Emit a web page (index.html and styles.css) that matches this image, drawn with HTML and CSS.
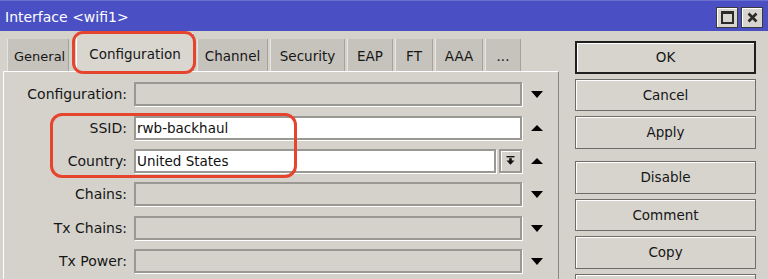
FILE: index.html
```html
<!DOCTYPE html>
<html>
<head>
<meta charset="utf-8">
<link rel="stylesheet" href="styles.css">
</head>
<body>
<div class="window">
  <div class="titlebar">
    <span class="title">Interface &lt;wifi1&gt;</span>
    <div class="tbtns">
      <div class="tbtn"><span class="maxicon"></span></div>
      <div class="tbtn"><svg width="11" height="11" viewBox="0 0 11 11"><path d="M1.5 1.5 L9.5 9.5 M9.5 1.5 L1.5 9.5" stroke="#2a2a2a" stroke-width="2.6"/></svg></div>
    </div>
  </div>
  <div class="main">
    <div class="left">
      <div class="tabs">
        <div class="tab t-general">General</div>
        <div class="tab active">Configuration</div>
        <div class="tab t-channel">Channel</div>
        <div class="tab t-security">Security</div>
        <div class="tab t-eap">EAP</div>
        <div class="tab t-ft">FT</div>
        <div class="tab t-aaa">AAA</div>
        <div class="tab t-more">...</div>
      </div>
      <div class="panel">
        <div class="row">
          <label>Configuration:</label>
          <div class="field"></div>
          <span class="tri down"></span>
        </div>
        <div class="row">
          <label>SSID:</label>
          <div class="field on">rwb-backhaul</div>
          <span class="tri up"></span>
        </div>
        <div class="row">
          <label>Country:</label>
          <div class="combo">
            <div class="field on">United States</div>
            <div class="dd"><svg width="9" height="9" viewBox="0 0 9 9"><rect x="0.5" y="0" width="8" height="1.4" fill="#111"/><rect x="3.2" y="2.2" width="2.6" height="3" fill="#111"/><path d="M0.5 4.6 H8.5 L4.5 8.8 Z" fill="#111"/></svg></div>
          </div>
          <span class="tri up"></span>
        </div>
        <div class="row">
          <label>Chains:</label>
          <div class="field"></div>
          <span class="tri down"></span>
        </div>
        <div class="row">
          <label>Tx Chains:</label>
          <div class="field"></div>
          <span class="tri down"></span>
        </div>
        <div class="row">
          <label>Tx Power:</label>
          <div class="field"></div>
          <span class="tri down"></span>
        </div>
      </div>
    </div>
    <div class="buttons">
      <div class="btn default">OK</div>
      <div class="btn">Cancel</div>
      <div class="btn">Apply</div>
      <div class="btn sep">Disable</div>
      <div class="btn">Comment</div>
      <div class="btn">Copy</div>
      <div class="btn"></div>
    </div>
  </div>
  <div class="mark mark-tab"></div>
  <div class="mark mark-fields"></div>
</div>
</body>
</html>
```

FILE: styles.css
```css
html, body {
  margin: 0;
  padding: 0;
}
body {
  width: 768px;
  height: 279px;
  overflow: hidden;
  background: #d5d2cc;
  font-family: "DejaVu Sans", Verdana, sans-serif;
  font-size: 13px;
  color: #161616;
}
.window {
  position: relative;
  width: 768px;
  height: 279px;
  overflow: hidden;
}
.titlebar {
  height: 31px;
  background: #4a50c3;
  border-top: 1px solid #6a70d2;
  box-sizing: border-box;
  display: flex;
  align-items: center;
  padding-left: 5px;
  padding-right: 5px;
  color: #fff;
}
.title {
  font-size: 14px;
  padding-top: 2px;
}
.tbtns {
  margin-left: auto;
  display: flex;
  gap: 3px;
  padding-top: 2px;
}
.tbtn {
  width: 22px;
  height: 21px;
  box-sizing: border-box;
  background: #d8d5cf;
  border: 1px solid #3a3a3a;
  box-shadow: inset 1px 1px 0 #fff;
  display: flex;
  align-items: center;
  justify-content: center;
}
.maxicon {
  width: 13px;
  height: 13px;
  box-sizing: border-box;
  border: 2px solid #2a2a2a;
  border-top-width: 3px;
}
.main {
  display: flex;
  height: 248px;
  overflow: hidden;
}
.left {
  width: 559px;
  padding-left: 3px;
  box-sizing: border-box;
}
.tabs {
  display: flex;
  align-items: flex-end;
  height: 40px;
  padding-left: 4px;
  gap: 2px;
}
.tab {
  height: 32px;
  box-sizing: border-box;
  background: #c6c3bd;
  border-left: 1px solid #e6e4e0;
  border-right: 1px solid #a5a29c;
  display: flex;
  align-items: center;
  justify-content: center;
  padding-top: 2px;
  font-size: 13.5px;
  white-space: nowrap;
  overflow: hidden;
  flex: none;
}
.t-general {
  width: 62px;
  justify-content: flex-start;
  padding-left: 6px;
  font-size: 13px;
}
.t-channel { width: 71px; }
.t-security { width: 75px; }
.t-eap { width: 46px; }
.t-ft { width: 38px; }
.t-aaa { width: 48px; }
.t-more { width: 36px; }
.tab.active {
  width: 118px;
  height: 38px;
  background: #d9d6d0;
  border-top: 1px solid #fff;
  border-left: 1px solid #fff;
  padding: 2px 0 0 0;
  margin: 0 1px 0 5px;
}
.panel {
  border-top: 1px solid #fff;
  border-left: 1px solid #fff;
  border-right: 1px solid #8a8782;
  height: 208px;
  box-sizing: border-box;
  padding-top: 10.3px;
  display: flex;
  flex-direction: column;
  gap: 9.33px;
}
.row {
  display: flex;
  align-items: center;
  height: 24px;
  flex: none;
}
.row label {
  width: 123px;
  text-align: right;
  flex: none;
  font-size: 14px;
}
.field {
  margin-left: 7px;
  width: 388px;
  height: 24px;
  box-sizing: border-box;
  border: 2px solid #9a9893;
  box-shadow: 1px 1px 0 #fff;
  background: #d5d2cc;
  padding-left: 1px;
  line-height: 20px;
  color: #111;
  font-size: 13.5px;
  flex: none;
}
.field.on {
  background: #fff;
}
.combo {
  margin-left: 7px;
  width: 388px;
  display: flex;
  gap: 3px;
  flex: none;
}
.combo .field {
  margin-left: 0;
  width: 362px;
}
.dd {
  width: 23px;
  height: 24px;
  box-sizing: border-box;
  border: 2px solid #9a9893;
  box-shadow: 1px 1px 0 #fff, inset 1px 1px 0 #fff;
  display: flex;
  align-items: center;
  justify-content: center;
}
.tri {
  margin-left: 9px;
  width: 0;
  height: 0;
  border-left: 6.5px solid transparent;
  border-right: 6.5px solid transparent;
}
.tri.down {
  border-top: 7px solid #000;
  margin-top: 1px;
}
.tri.up {
  border-bottom: 6px solid #000;
}
.buttons {
  margin-left: 16px;
  width: 181px;
  padding-top: 10px;
  display: flex;
  flex-direction: column;
  gap: 5px;
}
.btn {
  height: 32.5px;
  box-sizing: border-box;
  border: 1px solid #6f6d69;
  box-shadow: inset 1px 1px 0 #fff;
  background: #d7d4ce;
  display: flex;
  align-items: center;
  justify-content: center;
  flex: none;
  font-size: 13.5px;
}
.btn.default {
  border: 2px solid #1e1e1e;
}
.btn.sep {
  margin-top: 7.5px;
}
.mark {
  position: absolute;
  border: 3px solid #e5442d;
  box-sizing: border-box;
}
.mark-tab {
  left: 72px;
  top: 31px;
  width: 124px;
  height: 43px;
  border-radius: 11px;
}
.mark-fields {
  left: 50px;
  top: 113px;
  width: 247px;
  height: 65px;
  border-radius: 12px;
}
```
